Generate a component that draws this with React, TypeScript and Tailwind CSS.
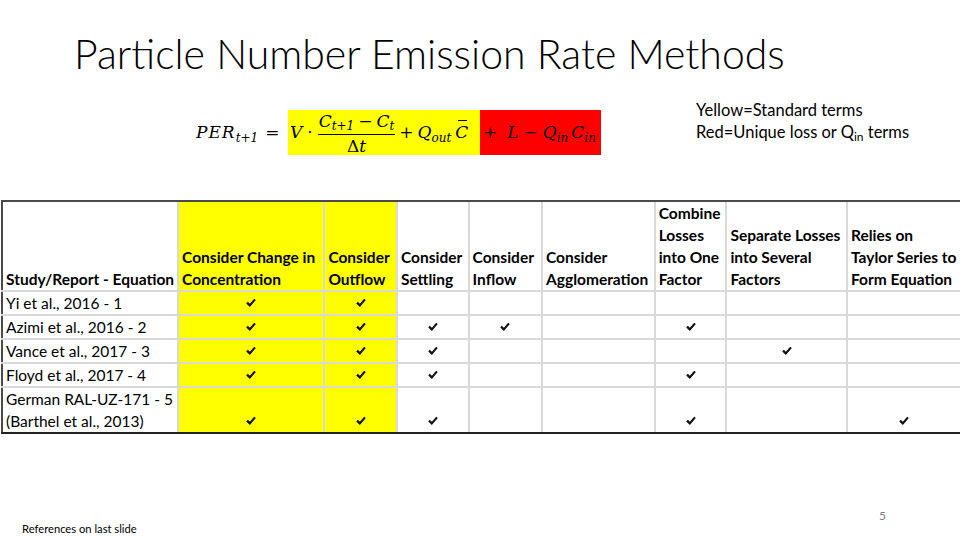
import React from 'react';

const cols = [176, 147, 73, 72, 74, 113, 72, 121, 113];

const headers = [
  ['Study/Report - Equation'],
  ['Consider Change in', 'Concentration'],
  ['Consider', 'Outflow'],
  ['Consider', 'Settling'],
  ['Consider', 'Inflow'],
  ['Consider', 'Agglomeration'],
  ['Combine', 'Losses', 'into One', 'Factor'],
  ['Separate Losses', 'into Several', 'Factors'],
  ['Relies on', 'Taylor Series to', 'Form Equation'],
];

// which columns (1..8) get a check
const rows: { label: string[]; checks: number[] }[] = [
  { label: ['Yi et al., 2016 - 1'], checks: [1, 2] },
  { label: ['Azimi et al., 2016 - 2'], checks: [1, 2, 3, 4, 6] },
  { label: ['Vance et al., 2017 - 3'], checks: [1, 2, 3, 7] },
  { label: ['Floyd et al., 2017 - 4'], checks: [1, 2, 3, 6] },
  { label: ['German RAL-UZ-171 - 5', '(Barthel et al., 2013)'], checks: [1, 2, 3, 6, 8] },
];

function Check() {
  return (
    <svg width="10" height="9" viewBox="0 0 10 9" className="inline-block">
      <path d="M1 4.6 L3.8 7.4 L9 1.4" fill="none" stroke="#111" strokeWidth="2.2" strokeLinejoin="miter" />
    </svg>
  );
}

function Sub({ children }: { children: React.ReactNode }) {
  return <span className="text-[12px] italic relative top-[5px] leading-none">{children}</span>;
}

function Equation() {
  return (
    <div className="flex items-center h-[45px] text-[17px] leading-none text-black" style={{ fontFamily: '"DejaVu Serif", serif' }}>
      <div className="w-[92px] flex items-center">
        <span className="italic tracking-[1px]">PER</span>
        <Sub>t+1</Sub>
        <span className="ml-[7px]">=</span>
      </div>
      <div className="bg-[#ffff00] h-full w-[192px] flex items-center pl-[2px]">
        <span className="italic">V</span>
        <span className="mx-[5px]">·</span>
        <div className="flex flex-col items-center relative top-[1px]">
          <div className="flex items-center px-[1px] pb-[4px] border-b border-black">
            <span className="italic">C</span>
            <Sub>t+1</Sub>
            <span className="mx-[4px]">−</span>
            <span className="italic">C</span>
            <Sub>t</Sub>
          </div>
          <div className="pt-[3px]">
            Δ<span className="italic">t</span>
          </div>
        </div>
        <span className="mx-[4px]">+</span>
        <span className="italic">Q</span>
        <Sub>out</Sub>
        <span className="italic ml-[4px] relative">
          C
          <span className="absolute left-[3px] top-[-4px] w-[9px] h-[1px] bg-black" />
        </span>
      </div>
      <div className="bg-[#ff0000] h-full w-[121px] flex items-center pl-[3px]">
        <span>+</span>
        <span className="italic ml-[10px]">L</span>
        <span className="mx-[5px]">−</span>
        <span className="italic">Q</span>
        <Sub>in</Sub>
        <span className="italic ml-[3px]">C</span>
        <Sub>in</Sub>
      </div>
    </div>
  );
}

export default function App() {
  return (
    <div className="w-[960px] h-[540px] bg-white relative overflow-hidden text-black" style={{ fontFamily: 'Lato, "Liberation Sans", sans-serif' }}>
      <h1 className="absolute left-[74px] top-[33px] text-[41px] font-light leading-none">
        Particle Number Emission Rate Methods
      </h1>

      <div className="absolute left-[196px] top-[110px]">
        <Equation />
      </div>

      <div className="absolute left-[696px] top-[99px] text-[16.5px] leading-[22px]">
        <div>Yellow=Standard terms</div>
        <div>
          Red=Unique loss or Q<span className="text-[12px] relative top-[3px]">in</span> terms
        </div>
      </div>

      <table className="absolute left-[1px] top-[200px] table-fixed border-collapse text-[15.5px]">
        <colgroup>
          {cols.map((w, i) => (
            <col key={i} style={{ width: w }} />
          ))}
        </colgroup>
        <thead>
          <tr className="h-[88px]">
            {headers.map((h, i) => (
              <th
                key={i}
                className={`align-bottom text-left font-bold leading-[22px] px-[3px] p-0 border-t-2 border-t-[#4a4a4a] border-b-2 border-b-[#d9d9d9] whitespace-nowrap ${
                  i === 0 ? 'border-l-2 border-l-[#4a4a4a]' : 'border-l-2 border-l-[#d9d9d9]'
                } ${i === 1 || i === 2 ? 'bg-[#ffff00]' : ''}`}
              >
                {h.map((l, j) => (
                  <div key={j}>{l}</div>
                ))}
              </th>
            ))}
          </tr>
        </thead>
        <tbody>
          {rows.map((r, ri) => {
            const last = ri === rows.length - 1;
            return (
              <tr key={ri} className={last ? 'h-[44px]' : 'h-[23px]'}>
                {cols.map((_, ci) => (
                  <td
                    key={ci}
                    className={`align-bottom px-[3px] leading-[22px] whitespace-nowrap ${
                      last ? 'border-b-2 border-b-[#222]' : 'border-b-2 border-b-[#d9d9d9]'
                    } ${ci === 0 ? 'border-l-2 border-l-[#4a4a4a] text-left' : 'border-l-2 border-l-[#d9d9d9] text-center'} ${
                      ci === 1 || ci === 2 ? 'bg-[#ffff00]' : ''
                    }`}
                  >
                    {ci === 0
                      ? r.label.map((l, j) => <div key={j}>{l}</div>)
                      : r.checks.includes(ci) && (
                          <div className="h-[22px] flex items-center justify-center pb-[2px]">
                            <Check />
                          </div>
                        )}
                  </td>
                ))}
              </tr>
            );
          })}
        </tbody>
      </table>

      <div className="absolute left-[22px] top-[521px] text-[11.2px]">References on last slide</div>
      <div className="absolute left-[879px] top-[507px] text-[12px] text-[#7f7f7f]">5</div>
    </div>
  );
}
